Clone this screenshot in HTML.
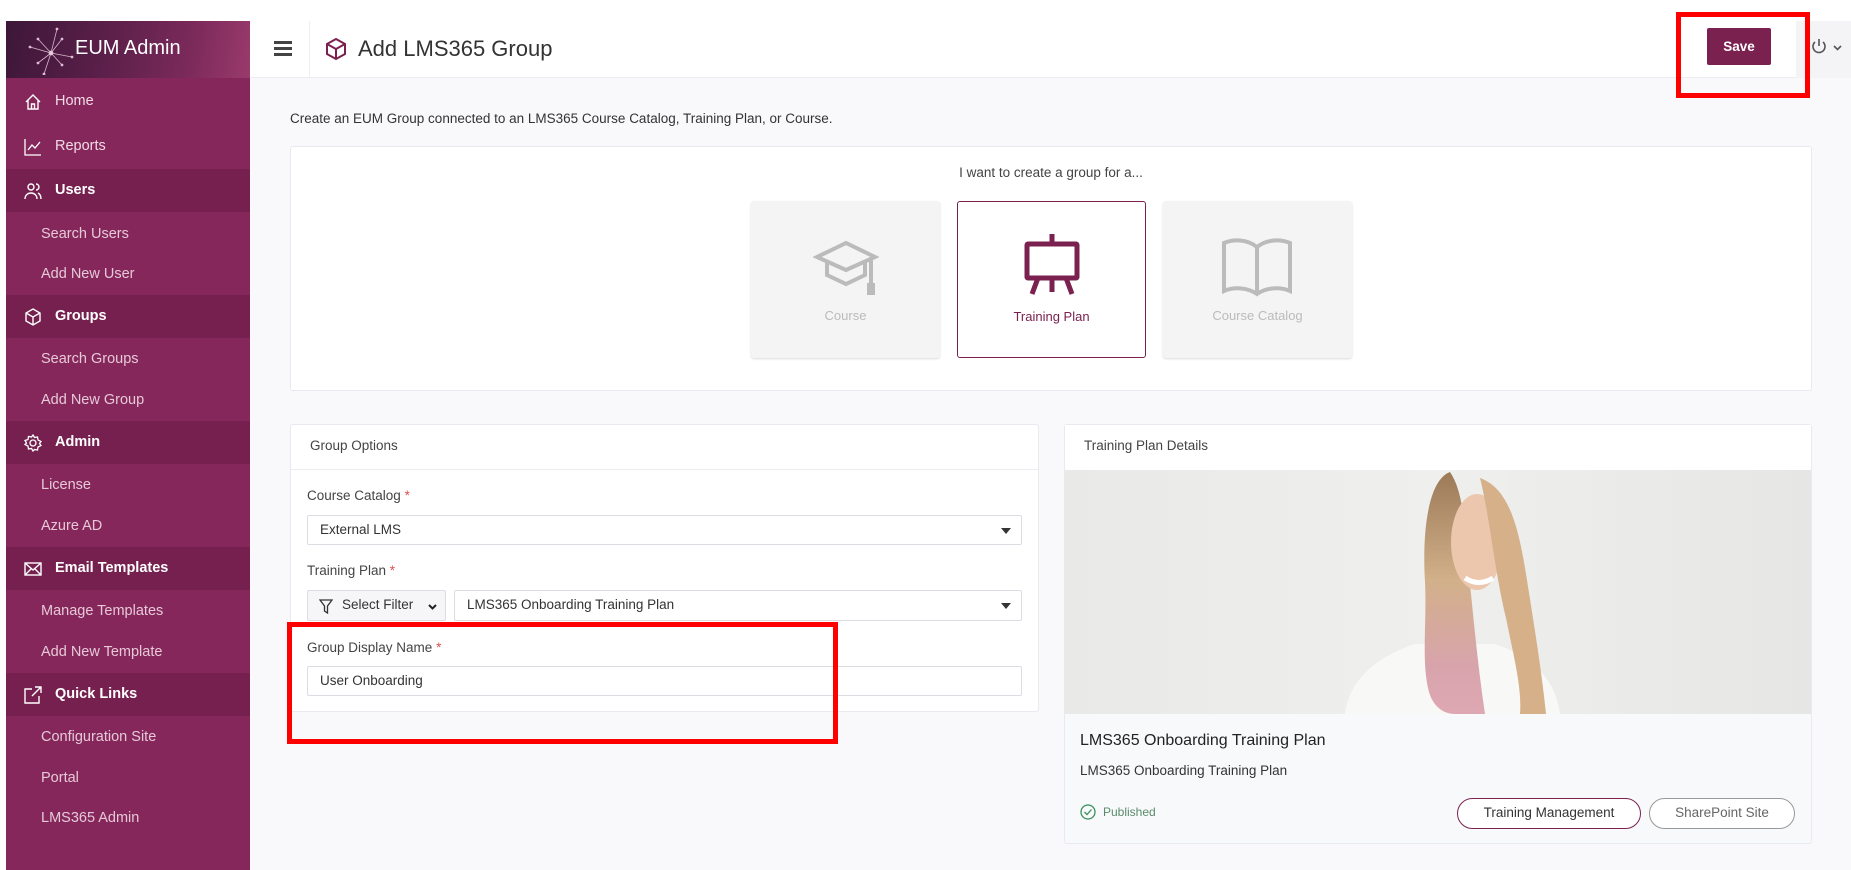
<!DOCTYPE html>
<html><head><meta charset="utf-8"><style>
*{box-sizing:border-box;margin:0;padding:0}
body{width:1851px;height:870px;background:#fff;font-family:"Liberation Sans",sans-serif;position:relative;overflow:hidden;color:#333}
.abs{position:absolute}
#side{left:6px;top:21px;width:244px;height:849px;background:#86275b}
#logo{left:0;top:0;width:244px;height:57px;background:linear-gradient(100deg,#3d1738 0%,#5a1f4a 40%,#7b2a5a 75%,#9a3a6c 100%);color:#fff;font-size:20px}
.it{position:absolute;left:0;width:244px;height:43px;color:#f1dbe6;font-size:14.5px;line-height:43px}
.it.h{background:#76204f;color:#fff;font-weight:bold}
.it .ic{position:absolute;left:18px;top:13px;width:18px;height:18px}
.it span{position:absolute;left:49px}
.it.s span{left:35px;color:#e6c9d8}
#hdr{left:250px;top:21px;width:1601px;height:57px;background:#fff;border-bottom:1px solid #ececf2}
#main{left:250px;top:78px;width:1601px;height:792px;background:#f9f9fc}
.card{position:absolute;background:#fff;border:1px solid #e9e9ef;border-radius:3px}
.tile{position:absolute;top:201px;width:189px;height:157px;background:#f4f4f4;border-radius:3px;box-shadow:0 1px 2px rgba(0,0,0,.15);text-align:center;color:#bbb;font-size:13px}
.tile .lb{position:absolute;top:107px;width:100%}
.inp{position:absolute;background:#fff;border:1px solid #dcdce2;border-radius:2px;font-size:13.5px;color:#333;line-height:28px;padding-left:12px}
.lbl{position:absolute;font-size:13.5px;color:#444}
.lbl i{color:#d9534f;font-style:normal}
.caret{position:absolute;right:10px;top:12px;border-left:5px solid transparent;border-right:5px solid transparent;border-top:6px solid #333}
.red{position:absolute;border:5px solid #f00}
.btn{position:absolute;border-radius:16px;background:#fff;font-size:13.5px;text-align:center;line-height:28px}
</style></head><body>

<div id="side" class="abs">
 <div id="logo" class="abs">
  <svg class="abs" style="left:18px;top:6px" width="50" height="48" viewBox="0 0 50 48"><g stroke="#d9b8cc" stroke-width="0.8" fill="#e8cfe0"><line x1="27" y1="26" x2="33" y2="2"/><line x1="27" y1="26" x2="6" y2="20"/><line x1="27" y1="26" x2="48" y2="30"/><line x1="27" y1="26" x2="20" y2="47"/><line x1="27" y1="26" x2="14" y2="12"/><line x1="27" y1="26" x2="38" y2="12"/><line x1="27" y1="26" x2="14" y2="36"/><line x1="27" y1="26" x2="38" y2="38"/><circle cx="27" cy="26" r="2"/><circle cx="33" cy="2" r="1"/><circle cx="6" cy="20" r="1"/><circle cx="48" cy="30" r="1"/><circle cx="20" cy="47" r="1"/><circle cx="14" cy="12" r="1"/><circle cx="38" cy="12" r="1"/><circle cx="14" cy="36" r="1"/><circle cx="38" cy="38" r="1"/></g></svg>
  <div class="abs" style="left:69px;top:16px">EUM Admin</div>
 </div>
 <div class="it" style="top:59px"><svg class="ic" viewBox="0 0 18 18" fill="none" stroke="#fff" stroke-width="1.4"><path d="M2 9L9 2l7 7M4 7.5V16h10V7.5M7.5 16v-5h3v5"/></svg><span>Home</span></div>
 <div class="it" style="top:104px"><svg class="ic" viewBox="0 0 18 18" fill="none" stroke="#fff" stroke-width="1.3"><path d="M1 1v16h16M4 12l4-5 3 3 5-6"/></svg><span>Reports</span></div>
 <div class="it h" style="top:148px"><svg class="ic" viewBox="0 0 18 18" fill="none" stroke="#fff" stroke-width="1.4"><circle cx="7" cy="5" r="3"/><path d="M1 17c0-4 3-6 6-6s6 2 6 6M12 2a3 3 0 010 6M14 11c2 1 3 3 3 6"/></svg><span>Users</span></div>
 <div class="it s" style="top:192px"><span>Search Users</span></div>
 <div class="it s" style="top:232px"><span>Add New User</span></div>
 <div class="it h" style="top:274px"><svg class="ic" viewBox="0 0 18 18" fill="none" stroke="#fff" stroke-width="1.4"><path d="M9 1l7 4v8l-7 4-7-4V5zM2 5l7 4 7-4M9 9v8"/></svg><span>Groups</span></div>
 <div class="it s" style="top:317px"><span>Search Groups</span></div>
 <div class="it s" style="top:358px"><span>Add New Group</span></div>
 <div class="it h" style="top:400px"><svg class="ic" viewBox="0 0 18 18" fill="none" stroke="#fff" stroke-width="1.3"><circle cx="9" cy="9" r="3"/><path d="M9 1l1.5 2.5 3-.5.5 3L17 7.5 15.5 9.5 17 11.5l-3 1.5-.5 3-3-.5L9 17l-1.5-2.5-3 .5-.5-3L1 10.5 2.5 9 1 6.5l3-1 .5-3 3 .5z"/></svg><span>Admin</span></div>
 <div class="it s" style="top:443px"><span>License</span></div>
 <div class="it s" style="top:484px"><span>Azure AD</span></div>
 <div class="it h" style="top:526px"><svg class="ic" viewBox="0 0 18 18" fill="none" stroke="#fff" stroke-width="1.4"><rect x="1" y="3" width="16" height="12"/><path d="M1 3l8 7 8-7M1 15l6-6M17 15l-6-6"/></svg><span>Email Templates</span></div>
 <div class="it s" style="top:569px"><span>Manage Templates</span></div>
 <div class="it s" style="top:610px"><span>Add New Template</span></div>
 <div class="it h" style="top:652px"><svg class="ic" viewBox="0 0 18 18" fill="none" stroke="#fff" stroke-width="1.4"><path d="M8 3H1v14h14v-7M11 1h6v6M17 1L8 10"/></svg><span>Quick Links</span></div>
 <div class="it s" style="top:695px"><span>Configuration Site</span></div>
 <div class="it s" style="top:736px"><span>Portal</span></div>
 <div class="it s" style="top:776px"><span>LMS365 Admin</span></div>
</div>

<div id="hdr" class="abs">
 <div class="abs" style="left:24px;top:20px;width:18px;height:3px;background:#444;box-shadow:0 6px 0 #444,0 12px 0 #444"></div>
 <div class="abs" style="left:59px;top:0;width:1px;height:57px;background:#eee"></div>
 <svg class="abs" style="left:75px;top:16px" width="22" height="24" viewBox="0 0 22 24" fill="none" stroke="#7b2150" stroke-width="2"><path d="M11 2l9 5v10l-9 5-9-5V7zM2 7l9 5 9-5M11 12v10"/></svg>
 <div class="abs" style="left:108px;top:15px;font-size:22px;color:#333">Add LMS365 Group</div>
 <div class="abs" style="left:1457px;top:7px;width:64px;height:37px;background:#7b2150;border-radius:2px;color:#fff;font-size:13.5px;font-weight:bold;text-align:center;line-height:37px">Save</div>
 <div class="abs" style="left:1546px;top:0;width:55px;height:57px;background:#f4f4f6"></div>
 <svg class="abs" style="left:1561px;top:17px" width="16" height="18" viewBox="0 0 16 18" fill="none" stroke="#555" stroke-width="1.6"><path d="M8 1v7M4 4a6 6 0 108 0"/></svg>
 <svg class="abs" style="left:1583px;top:24px" width="9" height="6" viewBox="0 0 9 6" fill="none" stroke="#555" stroke-width="1.6"><path d="M1 1l3.5 3.5L8 1"/></svg>
</div>

<div id="main" class="abs"></div>
<div class="abs" style="left:290px;top:111px;font-size:13.5px;color:#333">Create an EUM Group connected to an LMS365 Course Catalog, Training Plan, or Course.</div>

<div class="card" style="left:290px;top:146px;width:1522px;height:245px"></div>
<div class="abs" style="left:290px;top:165px;width:1522px;text-align:center;font-size:13.5px;color:#444">I want to create a group for a...</div>
<div class="tile" style="left:751px"><svg class="abs" style="left:62px;top:38px" width="66" height="58" viewBox="0 0 66 58" fill="none" stroke="#bbb" stroke-width="4"><path d="M33 4L4 18l29 13 29-13zM14 24v12l19 9 19-9V24M58 20v24"/><rect x="54" y="44" width="8" height="12" fill="#bbb" stroke="none"/></svg><div class="lb">Course</div></div>
<div class="tile" style="left:957px;background:#fff;border:1px solid #7b2150;box-shadow:none"><svg class="abs" style="left:64px;top:30px" width="60" height="64" viewBox="0 0 60 64" fill="none" stroke="#7b2150" stroke-width="5"><path d="M30 2v8"/><rect x="5" y="12" width="50" height="34" rx="1"/><path d="M16 46l-6 16M44 46l6 16M30 46v14"/></svg><div class="lb" style="color:#7b2150">Training Plan</div></div>
<div class="tile" style="left:1163px"><svg class="abs" style="left:58px;top:36px" width="72" height="60" viewBox="0 0 72 60" fill="none" stroke="#bbb" stroke-width="4"><path d="M36 10C26 2 12 2 3 6v48c9-4 23-4 33 3 10-7 24-7 33-3V6c-9-4-23-4-33 4zM36 10v47"/></svg><div class="lb">Course Catalog</div></div>

<div class="card" style="left:290px;top:424px;width:749px;height:288px"></div>
<div class="abs" style="left:291px;top:469px;width:747px;height:1px;background:#ececf0"></div>
<div class="abs" style="left:310px;top:438px;font-size:13.5px;color:#444">Group Options</div>
<div class="lbl" style="left:307px;top:488px">Course Catalog <i>*</i></div>
<div class="inp" style="left:307px;top:515px;width:715px;height:30px">External LMS<div class="caret"></div></div>
<div class="lbl" style="left:307px;top:563px">Training Plan <i>*</i></div>
<div class="inp" style="left:307px;top:590px;width:139px;height:31px;background:#f6f6f8;padding-left:34px">Select Filter<svg class="abs" style="left:11px;top:8px" width="14" height="15" viewBox="0 0 14 15" fill="none" stroke="#333" stroke-width="1.3"><path d="M1 1h12L8.5 7v7l-3-2V7z"/></svg><svg class="abs" style="left:120px;top:13px" width="9" height="6" viewBox="0 0 9 6" fill="none" stroke="#222" stroke-width="2"><path d="M1 1l3.5 3.5L8 1"/></svg></div>
<div class="inp" style="left:454px;top:590px;width:568px;height:31px">LMS365 Onboarding Training Plan<div class="caret"></div></div>
<div class="lbl" style="left:307px;top:640px">Group Display Name <i>*</i></div>
<div class="inp" style="left:307px;top:666px;width:715px;height:30px">User Onboarding</div>

<div class="card" style="left:1064px;top:424px;width:748px;height:420px;background:#f8f9fb"></div>
<div class="abs" style="left:1065px;top:425px;width:746px;height:45px;background:#fff"></div>
<div class="abs" style="left:1084px;top:438px;font-size:13.5px;color:#444">Training Plan Details</div>
<svg class="abs" style="left:1065px;top:470px" width="746" height="244" viewBox="0 0 746 244">
 <defs><linearGradient id="bg" x1="0" x2="1"><stop offset="0" stop-color="#e9e9e7"/><stop offset=".5" stop-color="#efefed"/><stop offset="1" stop-color="#e6e6e4"/></linearGradient>
 <linearGradient id="hair" x1="0" y1="0" x2="0" y2="1"><stop offset="0" stop-color="#9c7a58"/><stop offset=".45" stop-color="#d2b08a"/><stop offset=".8" stop-color="#d8a4ac"/><stop offset="1" stop-color="#dea8b2"/></linearGradient></defs>
 <rect width="746" height="244" fill="url(#bg)"/>
 <path d="M280 244c5-40 40-60 70-70l80 0c30 10 60 30 65 70z" fill="#f8f8f6"/>
 <path d="M385 2c-22 8-28 60-25 110 2 40-4 80 4 110 4 14 14 22 26 22h30c-6-40-10-80-14-120-6-60-6-100-21-122z" fill="url(#hair)"/>
 <ellipse cx="412" cy="72" rx="26" ry="48" fill="#ecc7ad"/>
 <path d="M400 108q14 9 28 0" stroke="#fff" stroke-width="5" fill="none"/>
 <path d="M415 8c10 40 14 90 26 140 8 40 16 70 14 96h26c-4-40-12-90-20-140-8-50-18-86-46-96z" fill="#d6b088"/>
</svg>
<div class="abs" style="left:1080px;top:732px;font-size:16px;color:#222">LMS365 Onboarding Training Plan</div>
<div class="abs" style="left:1080px;top:763px;font-size:13.5px;color:#333">LMS365 Onboarding Training Plan</div>
<svg class="abs" style="left:1080px;top:804px" width="16" height="16" viewBox="0 0 16 16" fill="none" stroke="#3c8f5c" stroke-width="1.3"><circle cx="8" cy="8" r="7"/><path d="M4.5 8l2.5 2.5 4.5-5"/></svg>
<div class="abs" style="left:1103px;top:805px;font-size:12px;color:#5a8a6a">Published</div>
<div class="btn" style="left:1457px;top:798px;width:184px;height:31px;border:1px solid #7b2150;color:#333">Training Management</div>
<div class="btn" style="left:1649px;top:798px;width:146px;height:31px;border:1px solid #999;color:#666">SharePoint Site</div>

<div class="red" style="left:1676px;top:12px;width:134px;height:86px"></div>
<div class="red" style="left:287px;top:622px;width:551px;height:122px"></div>
</body></html>
